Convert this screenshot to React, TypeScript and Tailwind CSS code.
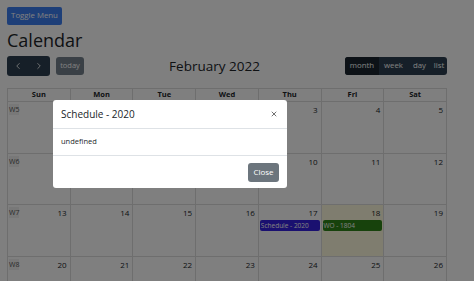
import { ChevronLeft, ChevronRight, X } from "lucide-react";

const days = ["Sun", "Mon", "Tue", "Wed", "Thu", "Fri", "Sat"];

const weeks = [
  { label: "W5", days: [30, 31, 1, 2, 3, 4, 5], other: [0, 1] },
  { label: "W6", days: [6, 7, 8, 9, 10, 11, 12], other: [] },
  { label: "W7", days: [13, 14, 15, 16, 17, 18, 19], other: [] },
  { label: "W8", days: [20, 21, 22, 23, 24, 25, 26], other: [] },
];

const Toolbar = () => (
  <div className="mt-[4px] flex h-[20px] w-[440px] items-center justify-between">
    <div className="flex items-center gap-[6px]">
      <div className="flex h-[20px] w-[43px] overflow-hidden rounded-[3px] bg-[#2c3e50] text-white">
        <button className="flex flex-1 items-center justify-center">
          <ChevronLeft className="h-[10px] w-[10px]" strokeWidth={2} />
        </button>
        <button className="flex flex-1 items-center justify-center">
          <ChevronRight className="h-[10px] w-[10px]" strokeWidth={2} />
        </button>
      </div>
      <button className="h-[18px] w-[28px] rounded-[3px] bg-[#2c3e50] text-[7.5px] text-white opacity-65">
        today
      </button>
    </div>
    <div className="text-[13.5px] font-medium">February 2022</div>
    <div className="flex h-[18px] overflow-hidden rounded-[3px] bg-[#2c3e50] text-[7.8px] text-white">
      <span className="flex w-[34px] items-center justify-center bg-[#1a252f]">month</span>
      <span className="flex w-[29px] items-center justify-center">week</span>
      <span className="flex w-[23px] items-center justify-center">day</span>
      <span className="flex w-[16px] items-center justify-center">list</span>
    </div>
  </div>
);

const Grid = () => (
  <div className="mt-[12px] w-[440px] border-l border-t border-[#dddddd]">
    <div className="grid grid-cols-7">
      {days.map((d) => (
        <div
          key={d}
          className="flex h-[13px] items-center justify-center border-b border-r border-[#dddddd] text-[7.5px] font-bold"
        >
          {d}
        </div>
      ))}
    </div>
    {weeks.map((w) => (
      <div key={w.label} className="grid h-[51.5px] grid-cols-7">
        {w.days.map((n, i) => (
          <div
            key={n}
            className={`border-b border-r border-[#dddddd] ${n === 18 ? "bg-[#fffadf]" : ""}`}
          >
            <div className="flex items-start justify-between pl-[1px] pr-[3px] pt-[2px]">
              {i === 0 ? (
                <span className="bg-[#d0d0d0]/30 text-[7px] leading-[11px] text-[#555]">{w.label}</span>
              ) : (
                <span />
              )}
              <span
                className={`text-[8px] leading-[12px] ${w.other.includes(i) ? "text-[#999]" : ""}`}
              >
                {n}
              </span>
            </div>
            {n === 17 && (
              <div className="mx-[1px] mt-[1px] h-[11px] truncate rounded-[2px] bg-[#3520e0] px-[1px] text-[6.5px] leading-[11px] text-white">
                Schedule - 2020
              </div>
            )}
            {n === 18 && (
              <div className="mx-[1px] mt-[1px] h-[11px] truncate rounded-[2px] bg-[#2f8418] px-[1px] text-[6.5px] leading-[11px] text-white">
                WO - 1804
              </div>
            )}
          </div>
        ))}
      </div>
    ))}
  </div>
);

const Modal = () => (
  <div className="fixed inset-0 bg-black/50">
    <div className="absolute left-[53px] top-[100px] w-[234px] rounded-[3px] bg-white text-[#212529]">
      <div className="flex h-[29px] items-center justify-between border-b border-[#dee2e6] px-[8px]">
        <span className="text-[10px] font-medium">Schedule - 2020</span>
        <X className="mr-[1px] h-[8px] w-[8px] text-[#555]" strokeWidth={2.5} />
      </div>
      <div className="flex h-[27px] items-center border-b border-[#dee2e6] px-[8px] text-[7.5px]">
        undefined
      </div>
      <div className="flex h-[32px] items-center justify-end px-[8px]">
        <button className="h-[19px] w-[31px] rounded-[3px] bg-[#6c757d] text-[8px] text-white">
          Close
        </button>
      </div>
    </div>
  </div>
);

export default function App() {
  return (
    <div className="relative min-h-screen bg-white font-['Open_Sans',sans-serif] text-[#212529]">
      <div className="flex flex-col items-start px-[7px] pt-[7px]">
        <button className="h-[18px] w-[55px] rounded-[2px] bg-[#3d7ef0] text-[7.8px] text-white">
          Toggle Menu
        </button>
        <h1 className="mt-[3px] text-[18px] font-medium leading-[24px]">Calendar</h1>
        <Toolbar />
        <Grid />
      </div>
      <Modal />
    </div>
  );
}
